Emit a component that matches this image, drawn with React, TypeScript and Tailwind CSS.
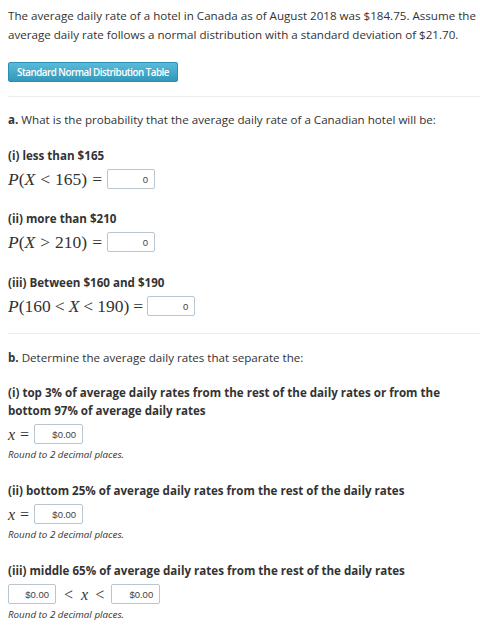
import React from 'react';

const serif = { fontFamily: '"Liberation Serif", "DejaVu Serif", serif' };

function Box({ value, w = 'w-[48px]' }: { value: string; w?: string }) {
  return (
    <span
      className={`inline-flex h-[20px] ${w} items-center justify-end rounded-[2px] border border-[#b9c6cf] bg-white pr-[6px] text-[9.5px] text-[#444]`}
      style={{ fontFamily: '"Liberation Sans", Arial, sans-serif' }}
    >
      {value}
    </span>
  );
}

function Rel({ children, m = 'mx-[5px]' }: { children: React.ReactNode; m?: string }) {
  return <span className={`${m} not-italic`}>{children}</span>;
}

function Note() {
  return <p className="mt-[4px] text-[9.8px] italic leading-[14px] text-[#333]">Round to 2 decimal places.</p>;
}

export default function App() {
  return (
    <div
      className="min-h-screen bg-white pl-[8px] pt-[6px] text-[11.6px] leading-[19px] text-[#333]"
      style={{ fontFamily: '"Open Sans", "Noto Sans", sans-serif' }}
    >
      <p>
        The average daily rate of a hotel in Canada as of August 2018 was $184.75. Assume the average daily rate
        follows a normal distribution with a standard deviation of $21.70.
      </p>

      <button className="mt-[18px] h-[20px] rounded-[2px] border border-[#2f8fb0] bg-gradient-to-b from-[#58bbdb] to-[#3398ba] px-[8px] text-[9.8px] font-semibold tracking-[-0.5px] text-white">
        Standard Normal Distribution Table
      </button>

      <hr className="mt-[14px] border-t border-[#ececec]" />

      <p className="mt-[13px]">
        <b>a.</b> What is the probability that the average daily rate of a Canadian hotel will be:
      </p>

      <p className="mt-[17px] font-bold">(i) less than $165</p>
      <div className="mt-[4px] flex items-center text-[17.5px]" style={serif}>
        <span className="italic">P</span>
        <span>(</span>
        <span className="italic">X</span>
        <Rel>&lt;</Rel>
        <span>165)</span>
        <Rel>=</Rel>
        <Box value="0" />
      </div>

      <p className="mt-[20px] font-bold">(ii) more than $210</p>
      <div className="mt-[4px] flex items-center text-[17.5px]" style={serif}>
        <span className="italic">P</span>
        <span>(</span>
        <span className="italic">X</span>
        <Rel>&gt;</Rel>
        <span>210)</span>
        <Rel>=</Rel>
        <Box value="0" />
      </div>

      <p className="mt-[21px] font-bold">(iii) Between $160 and $190</p>
      <div className="mt-[4px] flex items-center text-[17.5px]" style={serif}>
        <span className="italic">P</span>
        <span>(160</span>
        <Rel m="mx-[4px]">&lt;</Rel>
        <span className="italic">X</span>
        <Rel m="mx-[4px]">&lt;</Rel>
        <span>190)</span>
        <Rel m="mx-[4px]">=</Rel>
        <Box value="0" />
      </div>

      <hr className="mt-[17px] border-t border-[#ececec]" />

      <p className="mt-[14px]">
        <b>b.</b> Determine the average daily rates that separate the:
      </p>

      <p className="mt-[17px] pr-[8px] font-bold leading-[18px]">
        (i) top 3% of average daily rates from the rest of the daily rates or from the bottom 97% of average daily
        rates
      </p>
      <div className="mt-[4px] flex items-center text-[16px]" style={serif}>
        <span className="italic">x</span>
        <Rel>=</Rel>
        <Box value="$0.00" w="w-[49px]" />
      </div>
      <Note />

      <p className="mt-[19px] font-bold">(ii) bottom 25% of average daily rates from the rest of the daily rates</p>
      <div className="mt-[4px] flex items-center text-[16px]" style={serif}>
        <span className="italic">x</span>
        <Rel>=</Rel>
        <Box value="$0.00" w="w-[49px]" />
      </div>
      <Note />

      <p className="mt-[19px] font-bold">(iii) middle 65% of average daily rates from the rest of the daily rates</p>
      <div className="mt-[4px] flex items-center text-[16px]" style={serif}>
        <Box value="$0.00" w="w-[48px]" />
        <Rel m="mx-[8px]">&lt;</Rel>
        <span className="italic">x</span>
        <Rel m="mx-[7px]">&lt;</Rel>
        <Box value="$0.00" w="w-[49px]" />
      </div>
      <Note />
    </div>
  );
}
